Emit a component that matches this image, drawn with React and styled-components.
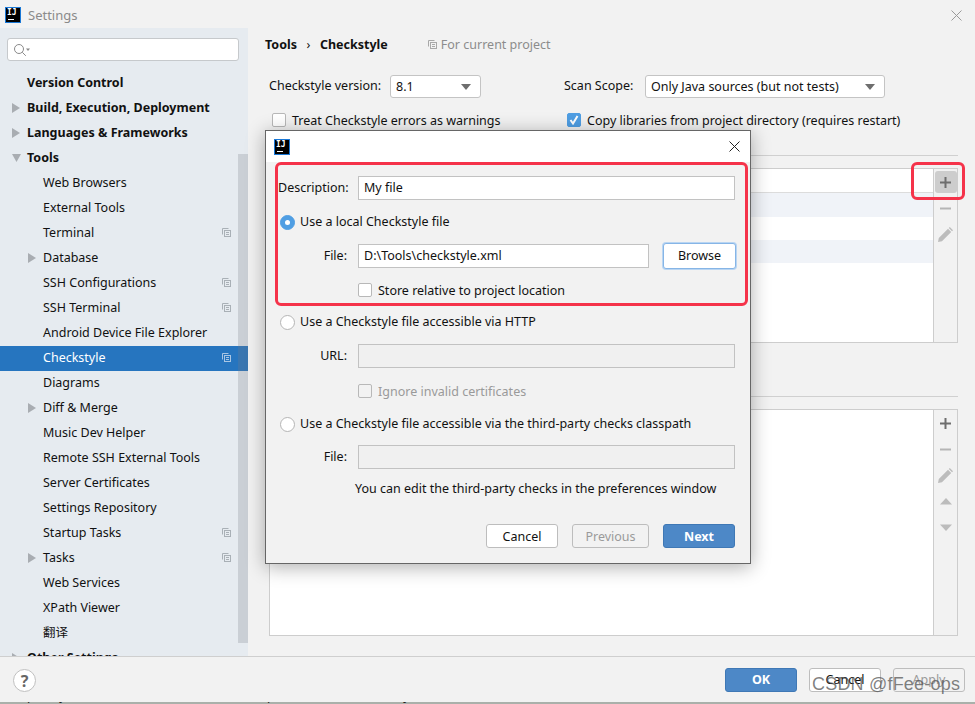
import React from "react";
import styled, { createGlobalStyle } from "styled-components";

const Global = createGlobalStyle`
  html, body { margin: 0; padding: 0; background: #f2f2f2; }
  * { box-sizing: border-box; }
`;

const Page = styled.div`
  position: relative; width: 975px; height: 704px; overflow: hidden; background: #f2f2f2;
  display: flex; flex-direction: column; color: #111;
  font: 12.5px/18px "Noto Sans", "Noto Sans CJK SC", sans-serif;
`;
const TitleBar = styled.div`
  height: 28px; flex: none; display: flex; align-items: center; padding: 2px 13px 0 5px; gap: 7px; color: #8a8a8a;
  font-size: 13px;
`;
const Logo = styled.div`
  position: relative; width: 16px; height: 16px; flex: none; background: #000; border: 1px solid #1a78d6;
  color: #fff; font: bold 8px/9px "DejaVu Sans Mono", monospace; padding: 0 0 0 1px;
  &::after { content: ""; position: absolute; left: 2px; bottom: 2px; width: 6px; height: 1px; background: #fff; }
`;
const TitleText = styled.span` flex: 1; `;
const Body = styled.div` flex: 1; min-height: 0; display: flex; `;
const Sidebar = styled.aside`
  position: relative; width: 248px; flex: none; background: #e6ebf0; overflow: hidden; padding-top: 10px;
`;
const Search = styled.div`
  margin: 0 9px 7px 7px; height: 23px; background: #fff; border: 1px solid #c6c9cc; border-radius: 3px;
  display: flex; align-items: center; padding-left: 5px;
`;
const Tree = styled.div` padding-top: 3px; `;
const TreeRow = styled.div`
  position: relative; height: 25px; display: flex; align-items: center; padding-bottom: 1px;
  padding-left: ${p => (p.$sub ? 43 : 27)}px;
  font-weight: ${p => (p.$sub ? 400 : 700)};
  background: ${p => (p.$active ? "#2675bf" : "transparent")};
  color: ${p => (p.$active ? "#fff" : "#111")};
`;
const ArrowSlot = styled.span`
  position: absolute; left: ${p => (p.$sub ? 28 : 12)}px; top: 7px; width: 9px; height: 10px; display: flex;
`;
const ProjectSlot = styled.span` position: absolute; left: 222px; top: 7px; display: flex; `;
const Scroll = styled.div`
  position: absolute; left: 238px; top: 126px; width: 10px; height: 489px; background: rgba(120,125,130,.25);
`;
const Main = styled.main` flex: 1; min-width: 0; padding: 6px 17px 0 21px; display: flex; flex-direction: column; `;
const Crumbs = styled.div` height: 20px; margin-left: -4px; padding-top: 1px; display: flex; align-items: center; font-weight: 700; `;
const CrumbSep = styled.span` width: 23px; text-align: center; font-weight: 400; `;
const ForProject = styled.span`
  margin-left: 40px; display: flex; align-items: center; gap: 4px; font-weight: 400; color: #8c8c8c;
`;
const OptionRow = styled.div`
  margin-top: ${p => p.$mt}px; height: ${p => p.$h}px; display: flex; align-items: center;
`;
const OptionLabel = styled.span` width: ${p => p.$w}px; flex: none; padding-bottom: 2px; `;
const Combo = styled.div`
  width: ${p => p.$w}px; height: 23px; flex: none; background: #fff; border: 1px solid #c4c4c4; border-radius: 3px;
  display: flex; align-items: center; justify-content: space-between; padding: 0 9px 0 5px; margin-right: ${p => p.$mr || 0}px;
  &::after { content: ""; border: 5px solid transparent; border-top: 6px solid #6e6e6e; border-bottom: 0; }
`;
const CheckLabel = styled.label`
  display: flex; align-items: center; gap: 6px; padding-top: 2px; width: ${p => p.$w ? p.$w + "px" : "auto"}; flex: none;
  color: ${p => (p.$off ? "#9a9a9a" : "inherit")}; margin-left: ${p => p.$ml || 0}px;
`;
const Box = styled.span`
  width: 14px; height: 14px; flex: none; border-radius: 2px; display: flex; align-items: center; justify-content: center;
  margin-top: -2px;
  background: ${p => (p.$on ? "#4f9ee3" : p.$off ? "#f2f2f2" : "#fff")};
  border: 1px solid ${p => (p.$on ? "#4f9ee3" : "#b8b8b8")};
`;
const Divider = styled.div` margin-top: ${p => p.$mt}px; height: 1px; flex: none; background: #d0d0d0; `;
const TablePanel = styled.section`
  margin-top: 12px; height: ${p => p.$h}px; flex: none; display: grid; grid-template-columns: 1fr 24px;
  border: 1px solid #cdcdcd; background: #fff;
`;
const TableList = styled.div` min-width: 0; `;
const TableHead = styled.div` height: 24px; border-bottom: 1px solid #dcdcdc; `;
const TableRowBar = styled.div` height: ${p => p.$h}px; background: ${p => (p.$alt ? "#f0f3f8" : "#fff")}; `;
const Tools = styled.div`
  background: #f2f2f2; border-left: 1px solid #cdcdcd; padding-top: 2px;
  display: flex; flex-direction: column; align-items: center; gap: 4px;
`;
const ToolBtn = styled.span`
  width: 22px; height: 22px; flex: none; border-radius: 3px; display: flex; align-items: center; justify-content: center;
  background: ${p => (p.$hot ? "#cdcdcd" : "transparent")};
`;
const Footer = styled.footer`
  height: 46px; flex: none; border-top: 1px solid #cfcfcf; background: #f2f2f2;
  display: flex; align-items: flex-start; padding: 11px 10px 0 13px; gap: 12px;
`;
const Help = styled.span`
  width: 23px; height: 23px; margin-top: 1px; border-radius: 50%; border: 1px solid #c0c0c0; background: #fff; color: #666; font-weight: 700;
  font-size: 16px; display: flex; align-items: center; justify-content: center; margin-right: auto;
`;
const Btn = styled.span`
  width: ${p => p.$w || 72}px; height: 24px; flex: none; border-radius: 3px; display: flex; align-items: center; justify-content: center;
  border: 1px solid ${p => (p.$primary ? "#3f78b5" : "#bdbdbd")};
  background: ${p => (p.$primary ? "#4d88c7" : p.$off ? "#f2f2f2" : "#fff")};
  color: ${p => (p.$primary ? "#fff" : p.$off ? "#9a9a9a" : "#111")};
  font-weight: ${p => (p.$primary ? 700 : 400)};
`;
const CutStrip = styled.div`
  height: 2px; flex: none; overflow: hidden; background: #aab0aa; color: #222; white-space: nowrap; padding-left: 10px;
`;
const CutText = styled.div` margin-top: -15px; letter-spacing: 1px; `;
const Dialog = styled.div`
  position: absolute; left: 265px; top: 130px; width: 486px; height: 434px; border: 1px solid #666; background: #f2f2f2;
  box-shadow: 0 3px 18px rgba(0,0,0,.32); display: flex; flex-direction: column;
`;
const DialogHead = styled.div`
  height: 31px; flex: none; background: #fff; display: flex; align-items: center; justify-content: space-between; padding: 0 10px 0 8px;
`;
const DialogBody = styled.div` padding: 0 15px 15px 12px; flex: 1; display: flex; flex-direction: column; `;
const FieldRow = styled.div`
  margin-top: ${p => p.$mt}px; height: 24px; flex: none; display: grid; grid-template-columns: 69px 1fr auto; column-gap: 11px; align-items: center;
`;
const FieldLabel = styled.span` text-align: right; white-space: nowrap; padding-bottom: 1px; `;
const Input = styled.div`
  grid-column: ${p => (p.$wide ? "2 / 4" : "auto")};
  height: 24px; border: 1px solid #c2c2c2; background: ${p => (p.$off ? "#f0f0f0" : "#fff")}; padding: 0 5px 1px; display: flex; align-items: center;
`;
const BrowseBtn = styled.span`
  width: 73px; height: 26px; margin-left: 3px; margin-right: -1px; background: #fff; border: 1px solid #86b5e6; border-radius: 3px;
  box-shadow: 0 0 0 1px #b9d5f2; display: flex; align-items: center; justify-content: center;
`;
const RadioRow = styled.label`
  margin-top: ${p => p.$mt}px; height: 20px; flex: none; display: flex; align-items: center; gap: 5px; padding-left: 2px;
`;
const Radio = styled.span`
  width: 15px; height: 15px; flex: none; border-radius: 50%; display: flex; align-items: center; justify-content: center;
  background: ${p => (p.$on ? "#4f9ee3" : "#fff")}; border: 1px solid ${p => (p.$on ? "#4f9ee3" : "#b5b5b5")};
  &::after { content: ""; width: 5px; height: 5px; border-radius: 50%; background: ${p => (p.$on ? "#fff" : "transparent")}; }
`;
const CheckRow = styled.div` margin-top: ${p => p.$mt}px; height: 16px; flex: none; display: flex; padding-left: 80px; `;
const Helper = styled.div` margin-top: 10px; height: 20px; flex: none; padding-left: 77px; display: flex; align-items: center; `;
const DialogActions = styled.div`
  margin-top: 25px; height: 24px; flex: none; display: flex; justify-content: flex-end; gap: 14px;
  ${Btn} { padding-top: 1px; }
`;
const RedMark = styled.div`
  position: absolute; left: ${p => p.$x}px; top: ${p => p.$y}px; width: ${p => p.$w}px; height: ${p => p.$h}px;
  border: 3px solid #f5334a; border-radius: 6px; pointer-events: none;
`;
const Watermark = styled.div`
  position: absolute; left: 812px; top: 673px; color: rgba(80,80,80,.72); white-space: nowrap; letter-spacing: .2px;
  font: 18px/22px "Liberation Sans", Arial, sans-serif;
`;

const ProjectIcon = ({ color = "#a9b0b6" }) => (
  <svg width="9" height="9" viewBox="0 0 9 9" fill="none" stroke={color}>
    <path d="M.5 6.500v-6h6" /><rect x="2.500" y="2.500" width="6" height="6" /><path d="M4 4.500h3M4 6.500h3" />
  </svg>
);
const Arrow = ({ down }) => (
  <svg width="9" height="10" viewBox="0 0 9 10" fill="#a9adb2">
    {down ? <path d="M0 1h9L4.500 9z" /> : <path d="M0 0l8 5-8 5z" />}
  </svg>
);
const Plus = () => (
  <svg width="13" height="13" viewBox="0 0 13 13" fill="#6e6e6e"><path d="M5.500 1h2v4.500H12v2H7.500V12h-2V7.500H1v-2h4.500z" /></svg>
);
const Minus = () => (
  <svg width="12" height="3" viewBox="0 0 12 3" fill="#b5b5b5"><rect width="11" height="2" y=".5" /></svg>
);
const Pencil = () => (
  <svg width="15" height="15" viewBox="0 0 15 15" fill="#bcbcbc"><path d="M0 15l.8-4L10 1.800 13.200 5 4 14.200zM10.800 1l1-1L15 3.200l-1 1z" /></svg>
);
const Tri = ({ up }) => (
  <svg width="12" height="7" viewBox="0 0 12 7" fill="#bcbcbc">{up ? <path d="M6 0l6 6.500H0z" /> : <path d="M0 .5h12L6 7z" />}</svg>
);
const Tick = () => (
  <svg width="10" height="10" viewBox="0 0 10 10" fill="none" stroke="#fff" strokeWidth="2"><path d="M1.500 5l2.500 3.500L8.500 1" /></svg>
);
const SearchIcon = () => (
  <svg width="18" height="14" viewBox="0 0 18 14" fill="none" stroke="#8a8a8a">
    <circle cx="6" cy="6" r="4.500" /><path d="M9.300 9.300l3.500 3.500" /><path d="M13 5.500h4l-2 2.500z" fill="#8a8a8a" stroke="none" />
  </svg>
);
const CloseX = ({ color }) => (
  <svg width="11" height="11" viewBox="0 0 11 11" stroke={color} fill="none"><path d="M.5.5l10 10M10.500.5l-10 10" /></svg>
);

const tree = [
  { t: "Version Control" },
  { t: "Build, Execution, Deployment", a: "r" },
  { t: "Languages & Frameworks", a: "r" },
  { t: "Tools", a: "d" },
  { t: "Web Browsers", s: 1 },
  { t: "External Tools", s: 1 },
  { t: "Terminal", s: 1, p: 1 },
  { t: "Database", s: 1, a: "r" },
  { t: "SSH Configurations", s: 1, p: 1 },
  { t: "SSH Terminal", s: 1, p: 1 },
  { t: "Android Device File Explorer", s: 1 },
  { t: "Checkstyle", s: 1, p: 1, active: 1 },
  { t: "Diagrams", s: 1 },
  { t: "Diff & Merge", s: 1, a: "r" },
  { t: "Music Dev Helper", s: 1 },
  { t: "Remote SSH External Tools", s: 1 },
  { t: "Server Certificates", s: 1 },
  { t: "Settings Repository", s: 1 },
  { t: "Startup Tasks", s: 1, p: 1 },
  { t: "Tasks", s: 1, a: "r", p: 1 },
  { t: "Web Services", s: 1 },
  { t: "XPath Viewer", s: 1 },
  { t: "翻译", s: 1 },
  { t: "Other Settings", a: "r" },
];

export default function App() {
  return (
    <Page>
      <Global />
      <TitleBar>
        <Logo>IJ</Logo>
        <TitleText>Settings</TitleText>
        <CloseX color="#9a9a9a" />
      </TitleBar>
      <Body>
        <Sidebar>
          <Search><SearchIcon /></Search>
          <Tree>
            {tree.map(r => (
              <TreeRow key={r.t} $sub={r.s} $active={r.active}>
                {r.a && <ArrowSlot $sub={r.s}><Arrow down={r.a === "d"} /></ArrowSlot>}
                {r.t}
                {r.p && <ProjectSlot><ProjectIcon color={r.active ? "#a9c6e4" : "#a9b0b6"} /></ProjectSlot>}
              </TreeRow>
            ))}
          </Tree>
          <Scroll />
        </Sidebar>
        <Main>
          <Crumbs>
            Tools<CrumbSep>›</CrumbSep>Checkstyle
            <ForProject><ProjectIcon color="#a8a8a8" />For current project</ForProject>
          </Crumbs>
          <OptionRow $mt={21} $h={23}>
            <OptionLabel $w={121}>Checkstyle version:</OptionLabel>
            <Combo $w={91} $mr={83}>8.1</Combo>
            <OptionLabel $w={81}>Scan Scope:</OptionLabel>
            <Combo $w={240}>Only Java sources (but not tests)</Combo>
          </OptionRow>
          <OptionRow $mt={14} $h={16}>
            <CheckLabel $w={295} $ml={3}><Box />Treat Checkstyle errors as warnings</CheckLabel>
            <CheckLabel><Box $on><Tick /></Box>Copy libraries from project directory (requires restart)</CheckLabel>
          </OptionRow>
          <Divider $mt={27} />
          <TablePanel $h={175}>
            <TableList>
              <TableHead />
              <TableRowBar $h={24} $alt />
              <TableRowBar $h={23} />
              <TableRowBar $h={23} $alt />
            </TableList>
            <Tools>
              <ToolBtn $hot><Plus /></ToolBtn>
              <ToolBtn><Minus /></ToolBtn>
              <ToolBtn><Pencil /></ToolBtn>
            </Tools>
          </TablePanel>
          <Divider $mt={53} />
          <TablePanel $h={227}>
            <TableList />
            <Tools>
              <ToolBtn><Plus /></ToolBtn>
              <ToolBtn><Minus /></ToolBtn>
              <ToolBtn><Pencil /></ToolBtn>
              <ToolBtn><Tri up /></ToolBtn>
              <ToolBtn><Tri /></ToolBtn>
            </Tools>
          </TablePanel>
        </Main>
      </Body>
      <Footer>
        <Help>?</Help>
        <Btn $primary>OK</Btn>
        <Btn>Cancel</Btn>
        <Btn $off>Apply</Btn>
      </Footer>
      <CutStrip><CutText>import java.util.concurrent.TimeUnit; public class Checkstyle</CutText></CutStrip>

      <Dialog>
        <DialogHead>
          <Logo>IJ</Logo>
          <CloseX color="#222" />
        </DialogHead>
        <DialogBody>
          <FieldRow $mt={14}>
            <FieldLabel>Description:</FieldLabel>
            <Input $wide>My file</Input>
          </FieldRow>
          <RadioRow $mt={12}><Radio $on />Use a local Checkstyle file</RadioRow>
          <FieldRow $mt={11}>
            <FieldLabel>File:</FieldLabel>
            <Input>D:\Tools\checkstyle.xml</Input>
            <BrowseBtn>Browse</BrowseBtn>
          </FieldRow>
          <CheckRow $mt={15}><CheckLabel><Box />Store relative to project location</CheckLabel></CheckRow>
          <RadioRow $mt={14}><Radio />Use a Checkstyle file accessible via HTTP</RadioRow>
          <FieldRow $mt={12}>
            <FieldLabel>URL:</FieldLabel>
            <Input $off $wide />
          </FieldRow>
          <CheckRow $mt={15}><CheckLabel $off><Box $off />Ignore invalid certificates</CheckLabel></CheckRow>
          <RadioRow $mt={15}><Radio />Use a Checkstyle file accessible via the third-party checks classpath</RadioRow>
          <FieldRow $mt={11}>
            <FieldLabel>File:</FieldLabel>
            <Input $off $wide />
          </FieldRow>
          <Helper>You can edit the third-party checks in the preferences window</Helper>
          <DialogActions>
            <Btn>Cancel</Btn>
            <Btn $off $w={77}>Previous</Btn>
            <Btn $primary>Next</Btn>
          </DialogActions>
        </DialogBody>
      </Dialog>
      <RedMark $x={275} $y={162} $w={473} $h={144} />
      <RedMark $x={911} $y={162} $w={54} $h={38} />
      <Watermark>CSDN @fFee-ops</Watermark>
    </Page>
  );
}
